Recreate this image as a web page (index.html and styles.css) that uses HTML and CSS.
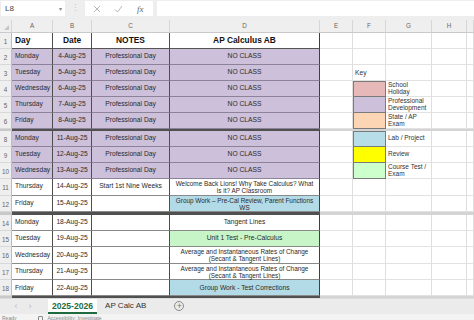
FILE: index.html
```html
<!DOCTYPE html>
<html>
<head>
<meta charset="utf-8">
<link rel="stylesheet" href="styles.css">
</head>
<body>
<div class="fbar">
  <div class="namebox"><span>L8</span><span class="dd">&#9662;</span></div>
  <div class="sep">&#8942;</div>
  <div class="fbtns">
    <svg class="ic ic-x" width="8" height="8" viewBox="0 0 8 8"><path d="M1 1L7 7M7 1L1 7" stroke="#b5b5b5" stroke-width="1"/></svg>
    <svg class="ic ic-ok" width="9" height="8" viewBox="0 0 9 8"><path d="M1 4.5L3.5 7L8 1" stroke="#b5b5b5" stroke-width="1" fill="none"/></svg>
    <span class="fx">fx</span>
  </div>
  <div class="finput"></div>
</div>

<table class="sheet">
  <colgroup>
    <col class="w-rh"><col class="w-a"><col class="w-b"><col class="w-c"><col class="w-d"><col class="w-e"><col class="w-f"><col class="w-g"><col class="w-h"><col class="w-i">
  </colgroup>
  <tr class="colhdr">
    <td class="corner"><span class="tri"></span></td><td>A</td><td>B</td><td>C</td><td>D</td><td>E</td><td>F</td><td>G</td><td>H</td><td></td>
  </tr>
  <tr class="r hdr">
    <td class="rh">1</td><td class="a">Day</td><td class="b">Date</td><td class="c">NOTES</td><td class="d">AP Calculus AB</td><td class="g"></td><td class="g"></td><td class="g"></td><td class="g"></td><td class="g"></td>
  </tr>
  <tr class="r p">
    <td class="rh">2</td><td class="a">Monday</td><td class="b">4-Aug-25</td><td class="c">Professional Day</td><td class="d">NO CLASS</td><td class="g"></td><td class="g"></td><td class="g"></td><td class="g"></td><td class="g"></td>
  </tr>
  <tr class="r p">
    <td class="rh">3</td><td class="a">Tuesday</td><td class="b">5-Aug-25</td><td class="c">Professional Day</td><td class="d">NO CLASS</td><td class="g"></td><td class="g keyt">Key</td><td class="g"></td><td class="g"></td><td class="g"></td>
  </tr>
  <tr class="r p">
    <td class="rh">4</td><td class="a">Wednesday</td><td class="b">6-Aug-25</td><td class="c">Professional Day</td><td class="d">NO CLASS</td><td class="g"></td><td class="sw pink"></td><td class="g kl">School<br>Holiday</td><td class="g"></td><td class="g"></td>
  </tr>
  <tr class="r p">
    <td class="rh">5</td><td class="a">Thursday</td><td class="b">7-Aug-25</td><td class="c">Professional Day</td><td class="d">NO CLASS</td><td class="g"></td><td class="sw purple"></td><td class="g kl">Professional<br>Development</td><td class="g"></td><td class="g"></td>
  </tr>
  <tr class="r p">
    <td class="rh">6</td><td class="a">Friday</td><td class="b">8-Aug-25</td><td class="c">Professional Day</td><td class="d">NO CLASS</td><td class="g"></td><td class="sw peach"></td><td class="g kl">State / AP<br>Exam</td><td class="g"></td><td class="g"></td>
  </tr>
  <tr class="hid">
    <td class="hrh"></td><td class="hk"></td><td class="hk"></td><td class="hk"></td><td class="hk"></td><td class="hl"></td><td class="hl"></td><td class="hl"></td><td class="hl"></td><td class="hl"></td>
  </tr>
  <tr class="r p">
    <td class="rh">8</td><td class="a">Monday</td><td class="b">11-Aug-25</td><td class="c">Professional Day</td><td class="d">NO CLASS</td><td class="g"></td><td class="sw blue"></td><td class="g kl">Lab / Project</td><td class="g"></td><td class="g"></td>
  </tr>
  <tr class="r p">
    <td class="rh">9</td><td class="a">Tuesday</td><td class="b">12-Aug-25</td><td class="c">Professional Day</td><td class="d">NO CLASS</td><td class="g"></td><td class="sw yellow"></td><td class="g kl">Review</td><td class="g"></td><td class="g"></td>
  </tr>
  <tr class="r p">
    <td class="rh">10</td><td class="a">Wednesday</td><td class="b">13-Aug-25</td><td class="c">Professional Day</td><td class="d">NO CLASS</td><td class="g"></td><td class="sw green"></td><td class="g kl">Course Test /<br>Exam</td><td class="g"></td><td class="g"></td>
  </tr>
  <tr class="r">
    <td class="rh">11</td><td class="a">Thursday</td><td class="b">14-Aug-25</td><td class="c">Start 1st Nine Weeks</td><td class="d two">Welcome Back Lions! Why Take Calculus? What<br>is it? AP Classroom</td><td class="g"></td><td class="g"></td><td class="g"></td><td class="g"></td><td class="g"></td>
  </tr>
  <tr class="r">
    <td class="rh">12</td><td class="a">Friday</td><td class="b">15-Aug-25</td><td class="c"></td><td class="d two cblue">Group Work &ndash; Pre-Cal Review, Parent Functions<br>WS</td><td class="g"></td><td class="g"></td><td class="g"></td><td class="g"></td><td class="g"></td>
  </tr>
  <tr class="hid hid3">
    <td class="hrh"></td><td class="hk"></td><td class="hk"></td><td class="hk"></td><td class="hk"></td><td class="hl"></td><td class="hl"></td><td class="hl"></td><td class="hl"></td><td class="hl"></td>
  </tr>
  <tr class="r">
    <td class="rh">14</td><td class="a">Monday</td><td class="b">18-Aug-25</td><td class="c"></td><td class="d">Tangent Lines</td><td class="g"></td><td class="g"></td><td class="g"></td><td class="g"></td><td class="g"></td>
  </tr>
  <tr class="r">
    <td class="rh">15</td><td class="a">Tuesday</td><td class="b">19-Aug-25</td><td class="c"></td><td class="d cgreen">Unit 1 Test - Pre-Calculus</td><td class="g"></td><td class="g"></td><td class="g"></td><td class="g"></td><td class="g"></td>
  </tr>
  <tr class="r">
    <td class="rh">16</td><td class="a">Wednesday</td><td class="b">20-Aug-25</td><td class="c"></td><td class="d two">Average and Instantaneous Rates of Change<br>(Secant &amp; Tangent Lines)</td><td class="g"></td><td class="g"></td><td class="g"></td><td class="g"></td><td class="g"></td>
  </tr>
  <tr class="r">
    <td class="rh">17</td><td class="a">Thursday</td><td class="b">21-Aug-25</td><td class="c"></td><td class="d two">Average and Instantaneous Rates of Change<br>(Secant &amp; Tangent Lines)</td><td class="g"></td><td class="g"></td><td class="g"></td><td class="g"></td><td class="g"></td>
  </tr>
  <tr class="r">
    <td class="rh">18</td><td class="a">Friday</td><td class="b">22-Aug-25</td><td class="c"></td><td class="d cblue">Group Work - Test Corrections</td><td class="g"></td><td class="g"></td><td class="g"></td><td class="g"></td><td class="g"></td>
  </tr>
  <tr class="hid">
    <td class="hrh"></td><td class="hk"></td><td class="hk"></td><td class="hk"></td><td class="hk"></td><td class="hl"></td><td class="hl"></td><td class="hl"></td><td class="hl"></td><td class="hl"></td>
  </tr>
</table>

<div class="tabs">
  <span class="nav">&#8249;</span>
  <span class="nav">&#8250;</span>
  <span class="tab active">2025-2026</span>
  <span class="tab">AP Calc AB</span>
  <span class="plus">+</span>
</div>
<div class="status">
  <span class="st">Ready</span>
  <span class="acc"><span class="accic"></span>Accessibility: Investigate</span>
</div>
</body>
</html>
```

FILE: styles.css
```css
* { box-sizing: border-box; }
html, body { margin: 0; padding: 0; }
body {
  width: 474px;
  height: 320px;
  overflow: hidden;
  background: #fff;
  font-family: "Liberation Sans", Arial, sans-serif;
  color: #222;
}

/* formula bar */
.fbar {
  display: flex;
  align-items: flex-start;
  height: 20px;
  background: #eeeeee;
  padding: 1px 0 0 1px;
}
.namebox {
  width: 64px;
  height: 15px;
  background: #fff;
  display: flex;
  align-items: center;
  justify-content: space-between;
  padding: 0 3px 0 4px;
  font-size: 8px;
  color: #444;
}
.dd { font-size: 6px; color: #888; }
.sep {
  width: 20px;
  height: 15px;
  line-height: 15px;
  text-align: center;
  color: #c4c4c4;
  font-size: 9px;
}
.fbtns {
  width: 68px;
  height: 15px;
  background: #fff;
  display: flex;
  align-items: center;
  padding-left: 8px;
}
.ic-ok { margin-left: 13px; }
.fx {
  margin-left: 14px;
  font-family: "Liberation Serif", serif;
  font-style: italic;
  font-size: 9px;
  color: #666;
}
.finput {
  flex: 1;
  height: 15px;
  background: #fff;
  margin-left: 4px;
}

/* sheet */
.sheet {
  border-collapse: separate;
  border-spacing: 0;
  table-layout: fixed;
  width: 474px;
  font-size: 6.7px;
}
.w-rh { width: 12px; }
.w-a { width: 41px; }
.w-b { width: 39px; }
.w-c { width: 78px; }
.w-d { width: 150px; }
.w-e { width: 33px; }
.w-f { width: 33px; }
.w-g { width: 46px; }
.w-h { width: 35px; }
.w-i { width: 7px; }

.sheet td {
  padding: 0 2px;
  white-space: nowrap;
  overflow: visible;
  line-height: 1;
  vertical-align: middle;
}

.colhdr td {
  height: 13px;
  background: #efefef;
  color: #666;
  text-align: center;
  font-size: 6.3px;
  border-right: 1px solid #d6d6d6;
  border-bottom: 1px solid #c9c9c9;
}
.colhdr .corner { position: relative; }
.tri {
  position: absolute;
  right: 2px;
  bottom: 2px;
  width: 0;
  height: 0;
  border-left: 5px solid transparent;
  border-bottom: 5px solid #c6c6c6;
}

.r td { height: 16px; }
.r .rh {
  background: #efefef;
  color: #666;
  text-align: center;
  font-size: 6.3px;
  padding: 3px 0 0;
  border-right: 1px solid #bdbdbd;
  border-bottom: 1px solid #d8d8d8;
}
.r .a, .r .b, .r .c, .r .d {
  border-right: 1px solid #4e4e4e;
  border-bottom: 1px solid #8a8a8a;
  color: #2a2a2a;
}
.r .a { text-align: left; padding-left: 3px; }
.r .b, .r .c, .r .d { text-align: center; }
.r .d { border-right-color: #3f3f3f; }

.hdr td.a, .hdr td.b, .hdr td.c, .hdr td.d {
  font-weight: bold;
  font-size: 8.4px;
  color: #111;
  border-bottom-color: #555;
}

.p .a, .p .b, .p .c, .p .d { background: #ccc0da; border-bottom-color: #8c829a; }

.d.two { font-size: 6.4px; line-height: 7.3px; padding-top: 1px; }
.cblue { background: #b3dbe7; }
.cgreen { background: #c8f5c8; }

.r .g {
  border-right: 1px solid #dedede;
  border-bottom: 1px solid #e2e2e2;
}
.keyt { vertical-align: bottom !important; padding: 0 0 3px 2px !important; color: #333; }
.kl { color: #333; font-size: 6.5px; line-height: 7.3px; padding-left: 2px !important; }

.sw { border: 1px solid #7a7a7a; border-top: 0; }
.pink { background: #e6b8b7; border-top: 1px solid #7a7a7a; }
.purple { background: #ccc0da; }
.peach { background: #fcd5b4; }
.blue { background: #b7dee8; border-top: 1px solid #7a7a7a; }
.yellow { background: #ffff00; }
.green { background: #ccffcc; }

.hid td {
  height: 2px;
  padding: 0;
  font-size: 0;
  line-height: 0;
}
.hid3 td { height: 3px; }
.hid .hrh { background: #c8c8c8; }
.hid .hk { background: #505050; }
.hid .hl { background: #d4d4d4; }

/* sheet tabs */
.tabs {
  height: 16px;
  background: #ebebeb;
  display: flex;
  align-items: stretch;
  padding-left: 9px;
  border-top: 1px solid #dcdcdc;
}
.nav {
  width: 14px;
  text-align: center;
  color: #b8b8b8;
  font-size: 9px;
  line-height: 14px;
}
.tab {
  font-size: 8px;
  line-height: 14px;
  padding: 0 5px;
  color: #333;
  margin-left: 3px;
}
.tab.active {
  margin-left: 11px;
  background: #fff;
  color: #1e6b40;
  font-weight: bold;
  font-size: 8.6px;
  padding: 0 4px;
  border-bottom: 2px solid #1e6b40;
}
.plus {
  margin: 2px 0 0 23px;
  width: 10px;
  height: 10px;
  border: 1px solid #8a8a8a;
  border-radius: 50%;
  color: #777;
  font-size: 9px;
  line-height: 8px;
  text-align: center;
}

.status {
  height: 9px;
  background: #f3f3f3;
  display: flex;
  align-items: flex-start;
  padding: 1px 0 0 2px;
  font-size: 5px;
  color: #888;
  line-height: 6px;
}
.acc { margin-left: 22px; display: flex; align-items: flex-start; }
.accic {
  width: 5px;
  height: 5px;
  border: 1px solid #888;
  border-radius: 1px;
  margin-right: 4px;
  margin-top: 0.5px;
}
```
